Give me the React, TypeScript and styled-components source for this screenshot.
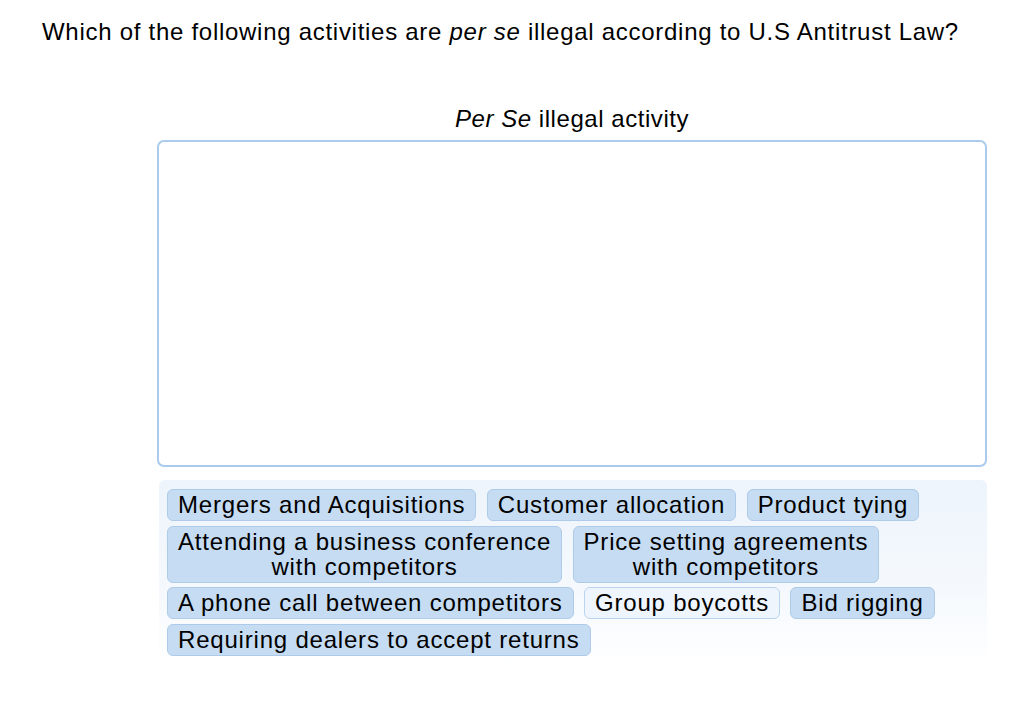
import React from "react";
import styled, { createGlobalStyle } from "styled-components";

const Global = createGlobalStyle`
  html, body { margin: 0; padding: 0; background: #ffffff; }
  body { font-family: "Liberation Sans", Arial, sans-serif; color: #000; }
`;

const Page = styled.div`
  width: 1024px;
  height: 715px;
  box-sizing: border-box;
  padding: 18px 0 0 42px;
  display: flex;
  flex-direction: column;
`;

const Question = styled.h1`
  margin: 0;
  font-size: 24px;
  letter-spacing: 0.72px;
  font-weight: normal;
  line-height: 28px;
  white-space: nowrap;
`;

const Board = styled.div`
  margin: 59px 0 0 115px;
  width: 830px;
  display: flex;
  flex-direction: column;
`;

const Heading = styled.div`
  text-align: center;
  font-size: 24px;
  letter-spacing: 0.55px;
  line-height: 28px;
  margin-bottom: 7px;
`;

const DropZone = styled.div`
  box-sizing: border-box;
  height: 327px;
  border: 2px solid #abcbed;
  border-radius: 7px;
  background: #ffffff;
`;

const Pool = styled.div`
  box-sizing: border-box;
  margin-top: 13px;
  margin-left: 2px;
  width: 828px;
  min-height: 180px;
  padding: 9px 8px 10px 8px;
  border-radius: 6px;
  background: linear-gradient(to bottom, #edf4fb 0%, #f5f9fd 60%, #ffffff 100%);
  display: flex;
  flex-wrap: wrap;
  align-content: flex-start;
  column-gap: 10.5px;
  row-gap: 4.5px;
`;

const Chip = styled.div<{ $light?: boolean }>`
  box-sizing: border-box;
  padding: 2px 10px 3px 10px;
  border: 1px solid ${(p) => (p.$light ? "#b9d4ef" : "#aecbea")};
  background: ${(p) => (p.$light ? "#eef5fc" : "#c6dcf2")};
  border-radius: 6px;
  font-size: 24px;
  letter-spacing: 0.8px;
  line-height: 25px;
  text-align: center;
  white-space: nowrap;
`;

const items: { lines: string[]; light?: boolean }[] = [
  { lines: ["Mergers and Acquisitions"] },
  { lines: ["Customer allocation"] },
  { lines: ["Product tying"] },
  { lines: ["Attending a business conference", "with competitors"] },
  { lines: ["Price setting agreements", "with competitors"] },
  { lines: ["A phone call between competitors"] },
  { lines: ["Group boycotts"], light: true },
  { lines: ["Bid rigging"] },
  { lines: ["Requiring dealers to accept returns"] },
];

export default function App() {
  return (
    <>
      <Global />
      <Page>
        <Question>
          Which of the following activities are <i>per se</i> illegal according to U.S Antitrust Law?
        </Question>
        <Board>
          <Heading>
            <i>Per Se</i> illegal activity
          </Heading>
          <DropZone />
          <Pool>
            {items.map((it, i) => (
              <Chip key={i} $light={it.light}>
                {it.lines.map((l, j) => (
                  <React.Fragment key={j}>
                    {j > 0 && <br />}
                    {l}
                  </React.Fragment>
                ))}
              </Chip>
            ))}
          </Pool>
        </Board>
      </Page>
    </>
  );
}
